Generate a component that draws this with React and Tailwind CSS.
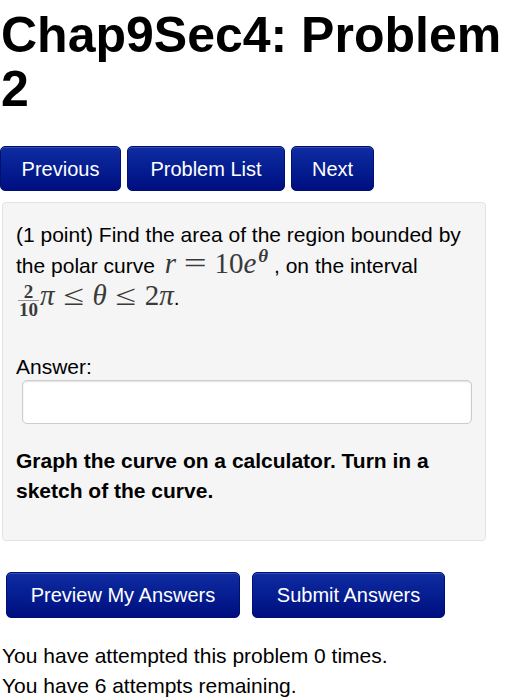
export default function App() {
  const navBtn =
    "h-[45px] rounded-[5px] border border-[#001070] bg-gradient-to-b from-[#102ca2] to-[#000d80] text-white text-[20px] flex items-center justify-center shadow-[inset_0_1px_0_rgba(255,255,255,0.15)]"
  const mathFont = { fontFamily: '"Liberation Serif", "DejaVu Serif", serif' }

  return (
    <div
      className="w-[526px] h-[700px] bg-white overflow-hidden text-black"
      style={{ fontFamily: '"Liberation Sans", Arial, sans-serif' }}
    >
      <h1 className="mt-[8px] pl-[1px] pr-[20px] text-[50px] leading-[54px] font-bold">Chap9Sec4: Problem 2</h1>

      <div className="mt-[30px] flex gap-[6px]">
        <button className={`${navBtn} w-[121px]`}>Previous</button>
        <button className={`${navBtn} w-[158px]`}>Problem List</button>
        <button className={`${navBtn} w-[83px]`}>Next</button>
      </div>

      <div className="mt-[11px] ml-[2px] w-[484px] rounded-[4px] border border-[#e3e3e3] bg-[#f5f5f5] pl-[13px] pr-[10px] pt-[16px] pb-[34px] text-[21px]">
        <p className="leading-[31px]">
          (1 point) Find the area of the region bounded by the polar curve{" "}
          <span className="text-[29px] leading-[20px] text-[#3a3a3a] whitespace-nowrap" style={mathFont}>
            <i className="ml-[4px]">r</i>
            <span className="inline-block mx-[11px] scale-x-[1.4]">=</span>
            10<i>e</i>
            <span className="inline-block align-top text-[19px] leading-[18px] italic font-bold relative top-[-3px] ml-[2px]">θ</span>
          </span>{" "}
          , on the interval
          <br />
          <span className="text-[29px] leading-[20px] text-[#3a3a3a] whitespace-nowrap" style={mathFont}>
            <span className="inline-flex flex-col items-center align-middle text-[19px] leading-[17px] font-bold relative top-[2px] ml-[2px] mr-[1px]">
              <span className="px-[1px]">2</span>
              <span className="border-t border-[#999] px-[1px]">10</span>
            </span>
            <i>π</i>
            <span className="inline-block mx-[11px] scale-x-[1.3]">≤</span>
            <i>θ</i>
            <span className="inline-block mx-[11px] scale-x-[1.3]">≤</span>
            2<i>π</i>
          </span>
          .
        </p>

        <p className="mt-[38px] leading-[26px]">Answer:</p>
        <input
          type="text"
          className="block ml-[6px] w-[450px] h-[44px] rounded-[5px] border border-[#cccccc] bg-white shadow-[inset_0_1px_2px_rgba(0,0,0,0.12)] outline-none"
        />

        <p className="mt-[22px] leading-[30px] font-bold">
          Graph the curve on a calculator. Turn in a sketch of the curve.
        </p>
      </div>

      <div className="mt-[31px] ml-[6px] flex gap-[12px]">
        <button className={`${navBtn} w-[234px] h-[46px]`}>Preview My Answers</button>
        <button className={`${navBtn} w-[193px] h-[46px]`}>Submit Answers</button>
      </div>

      <div className="mt-[23px] pl-[2px] text-[21px] leading-[30px]">
        <p>You have attempted this problem 0 times.</p>
        <p>You have 6 attempts remaining.</p>
      </div>
    </div>
  )
}
